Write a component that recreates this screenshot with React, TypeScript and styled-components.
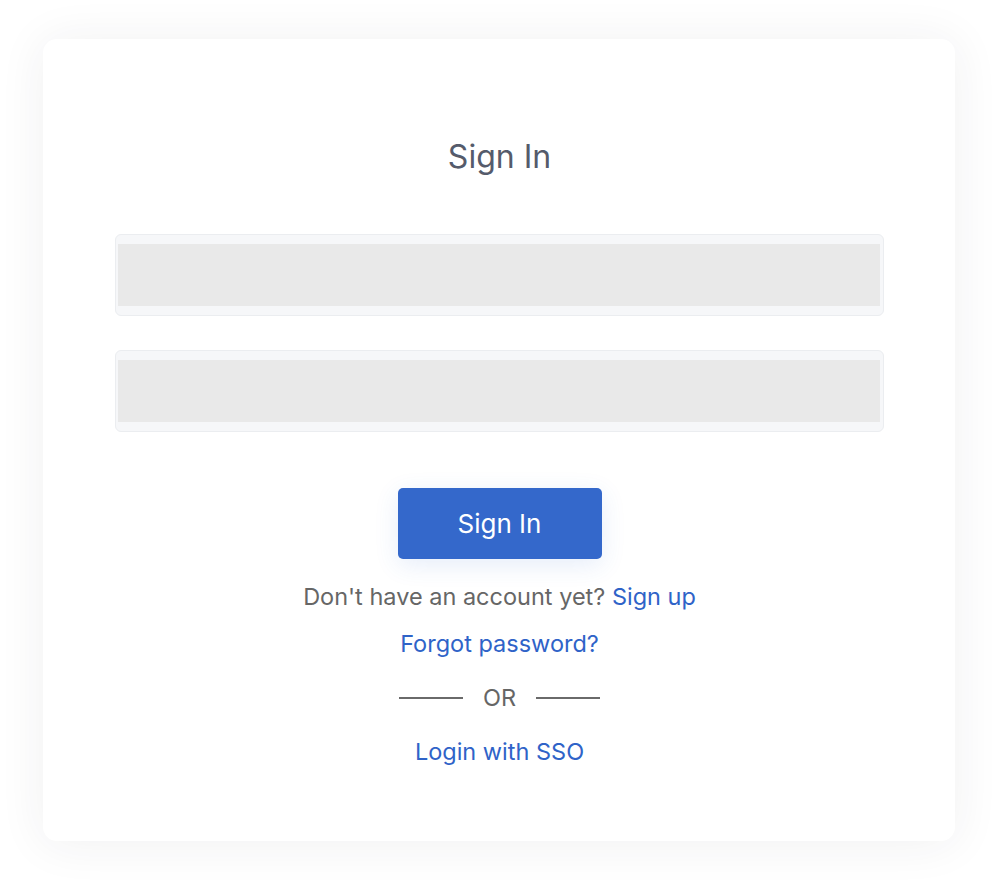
import styled, { createGlobalStyle } from 'styled-components'

const GlobalStyle = createGlobalStyle`
	html, body {
		margin: 0;
		padding: 0;
		background: #ffffff;
		font-family: Inter, 'Noto Sans', sans-serif;
	}
`

const Page = styled.div`
	padding: 39px 45px 53px 43px;
`

const Card = styled.section`
	height: 802px;
	box-sizing: border-box;
	padding: 98px 71px 0 72px;
	border-radius: 14px;
	background: #ffffff;
	box-shadow: 0 2px 48px rgba(40, 44, 60, 0.07);
	display: flex;
	flex-direction: column;
	align-items: center;
`

const Title = styled.h1`
	margin: 0 0 57px;
	font-size: 32px;
	line-height: 40px;
	font-weight: 400;
	color: #555b6b;
`

const Field = styled.div<{ $gap: number }>`
	width: 100%;
	box-sizing: border-box;
	height: 82px;
	padding: 9px 3px 9px 2px;
	margin-bottom: ${(p) => p.$gap}px;
	border: 1px solid #ebedf0;
	border-radius: 6px;
	background: #f6f7f9;
`

const Input = styled.input`
	display: block;
	width: 100%;
	height: 100%;
	box-sizing: border-box;
	border: none;
	outline: none;
	background: #e9e9e9;
	font: inherit;
`

const Button = styled.button`
	width: 204px;
	height: 71px;
	margin-bottom: 22px;
	border: none;
	border-radius: 5px;
	background: #3468cb;
	color: #ffffff;
	font-family: inherit;
	font-size: 26px;
	box-shadow: 0 6px 24px rgba(52, 104, 203, 0.12);
	cursor: pointer;
`

const Line = styled.p<{ $gap: number }>`
	margin: 0 0 ${(p) => p.$gap}px;
	font-size: 23.5px;
	line-height: 32px;
	color: #666666;
`

const Link = styled.a`
	color: #2f63c8;
	text-decoration: none;
`

const Divider = styled.div`
	display: flex;
	align-items: center;
	gap: 20px;
	margin-bottom: 22px;
	font-size: 23.5px;
	line-height: 32px;
	color: #666666;

	&::before,
	&::after {
		content: '';
		width: 64px;
		height: 2px;
		background: #6a6a6a;
	}
`

export default function App() {
	return (
		<>
			<GlobalStyle />
			<Page>
				<Card>
					<Title>Sign In</Title>
					<Field $gap={34}>
						<Input type='text' aria-label='Username' />
					</Field>
					<Field $gap={56}>
						<Input type='password' aria-label='Password' />
					</Field>
					<Button>Sign In</Button>
					<Line $gap={15}>
						Don't have an account yet? <Link href='#'>Sign up</Link>
					</Line>
					<Line $gap={22}>
						<Link href='#'>Forgot password?</Link>
					</Line>
					<Divider>OR</Divider>
					<Line $gap={0}>
						<Link href='#'>Login with SSO</Link>
					</Line>
				</Card>
			</Page>
		</>
	)
}
